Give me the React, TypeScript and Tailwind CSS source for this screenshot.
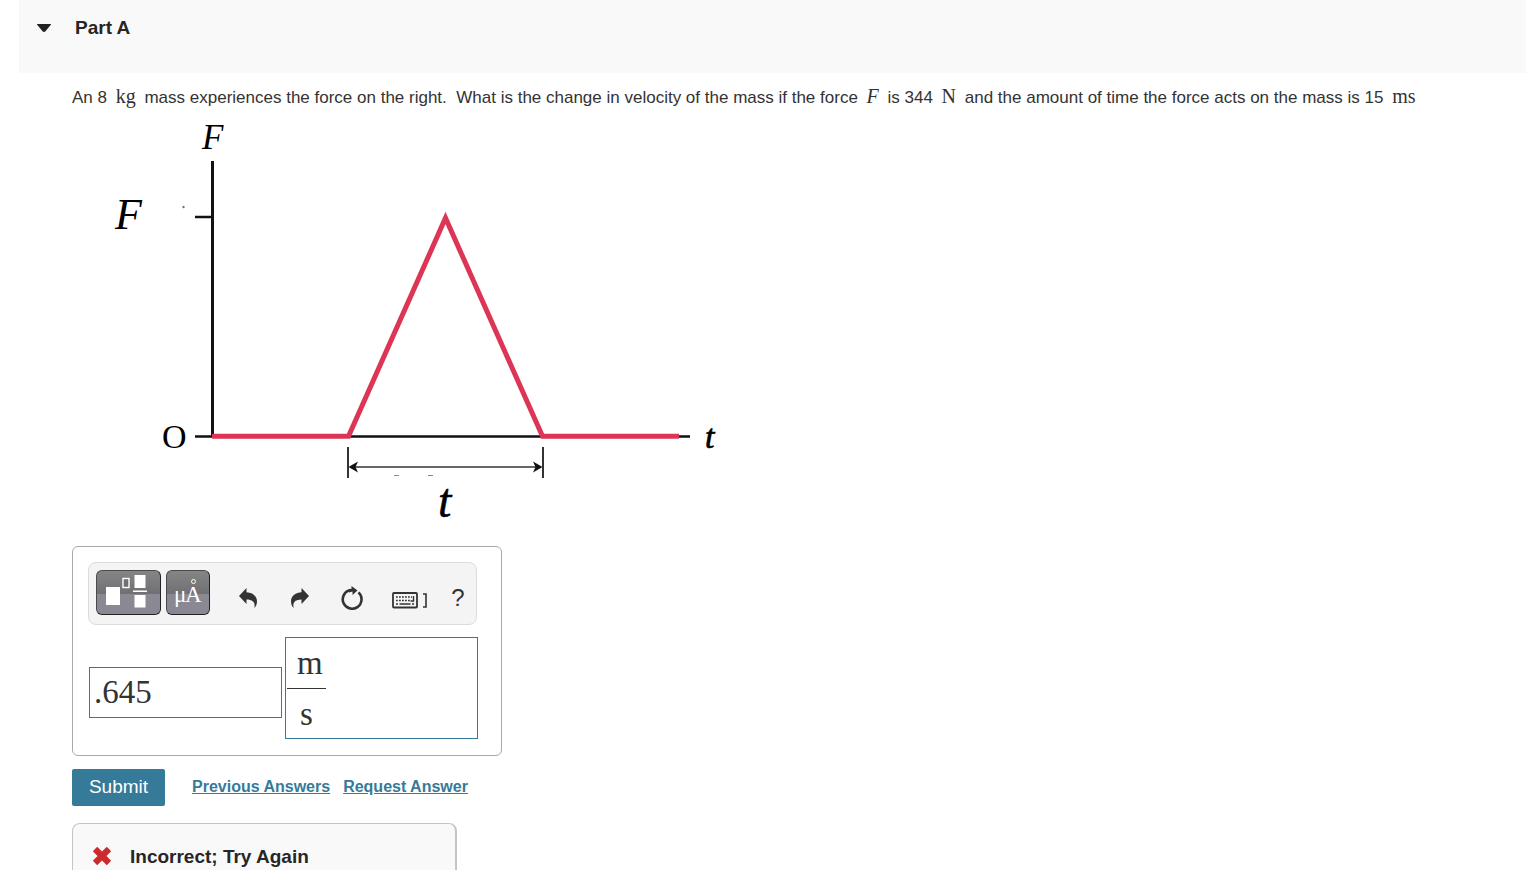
import type { ReactNode } from 'react';

const serif = "font-['Liberation_Serif',serif]";

function MathText({ children, italic = false }: { children: ReactNode; italic?: boolean }) {
  return <span className={`${serif} mx-1 text-[20px] ${italic ? 'italic' : ''}`}>{children}</span>;
}

function PartHeader() {
  return (
    <header className="ml-[19px] h-[73px] bg-[#f9f9f9] pt-3 pl-[18px]">
      <button type="button" aria-expanded="true" className="flex h-8 items-center text-[19px] font-bold text-[#262626]">
        <svg width="14" height="8" viewBox="0 0 14 8" className="mr-6 fill-[#222]">
          <path d="M0 0H14Q14 1 13 1.8L8.5 7.2Q7 8.6 5.5 7.2L1 1.8Q0 1 0 0Z" />
        </svg>
        Part A
      </button>
    </header>
  );
}

function ForceGraph() {
  return (
    <svg width="660" height="421" viewBox="72 109 660 421" className="block" role="img" aria-label="Force as a function of time">
      <g className="font-['Liberation_Serif',serif] italic" fill="#000">
        <text x="202" y="149" fontSize="35">F</text>
        <text x="115" y="229" fontSize="44">F</text>
        <text x="705" y="448" fontSize="34" stroke="#000" strokeWidth="0.7">t</text>
        <text x="438" y="517" fontSize="48" stroke="#000" strokeWidth="0.5">t</text>
      </g>
      <text x="162" y="448" fontSize="34" className="font-['Liberation_Serif',serif]">O</text>

      {/* axes */}
      <path d="M212.5 161V437" stroke="#111" strokeWidth="3" />
      <path d="M195 217H212M195 436.5H690" stroke="#111" strokeWidth="2.4" />
      <circle cx="183.5" cy="207" r="1.2" fill="#777" />

      {/* force pulse */}
      <path d="M212 436.3H348.5L445.5 218L542.5 436.3H679" fill="none" stroke="#dc3556" strokeWidth="5" strokeMiterlimit="10" />

      {/* duration marker */}
      <path d="M348 447V478M543 447V478" stroke="#333" strokeWidth="2" />
      <path d="M352 467H540" stroke="#333" strokeWidth="1.6" />
      <path d="M348.5 467L358 461.5L355.5 467L358 472.5ZM542.5 467L533 461.5L535.5 467L533 472.5Z" fill="#111" />
      <path d="M394 475.5H399M428 475.5H433" fill="none" stroke="#888" strokeWidth="1" />
    </svg>
  );
}

function UndoArrow() {
  return <path d="M0 8L7.5 0V4.300C13 4.500 18 7.500 18 13.500C18 16 17 18.500 15.300 20C16.500 15 14.500 11.500 7.500 11.500V16Z" />;
}

function Toolbar() {
  const darkButton =
    'flex h-[45px] shrink-0 items-center justify-center overflow-hidden rounded-md border border-[#4a4a4c] border-r-[#222] border-b-[#222] bg-linear-to-b from-[#858588] to-[#5f5f60]';
  const iconButton = 'flex h-12 w-13 shrink-0 items-center justify-center';

  return (
    <div role="toolbar" className="flex h-[63px] items-start rounded-lg border border-[#dcdcdc] bg-[#f4f4f4] py-[7px] pl-[7px]">
      <button type="button" aria-label="Templates" className={`${darkButton} w-[65px]`}>
        <svg width="63" height="43" viewBox="97 571 63 43" className="shrink-0">
          <rect x="97" y="594" width="63" height="20" fill="#8a8993" />
          <g fill="#fff">
            <path d="M106 587H120V605H106ZM134.500 575H145.500V588H134.500ZM134.500 595H145.500V607.500H134.500ZM133 590.500H147V592H133Z" />
          </g>
          <rect x="123" y="578.500" width="6" height="9" fill="#707073" stroke="#fff" strokeWidth="1.400" />
        </svg>
      </button>
      <button type="button" aria-label="Units" className={`${darkButton} ml-[5px] w-11`}>
        <svg width="42" height="43" viewBox="167 571 42 43" className="shrink-0">
          <rect x="167" y="594" width="42" height="20" fill="#8a8993" />
          <text x="174" y="602" fontSize="23" fill="#fff" className="font-['Liberation_Serif',serif]">μ</text>
          <text x="185" y="602" fontSize="23" fill="#fff" className="font-['Liberation_Serif',serif]">A</text>
          <circle cx="193.500" cy="581.500" r="2" fill="none" stroke="#fff" strokeWidth="1" />
        </svg>
      </button>
      <div className="ml-3 flex pt-1">
        <button type="button" aria-label="Undo" className={iconButton}>
          <svg width="18" height="20" viewBox="0 0 18 20" className="fill-[#333]"><UndoArrow /></svg>
        </button>
        <button type="button" aria-label="Redo" className={iconButton}>
          <svg width="18" height="20" viewBox="0 0 18 20" className="fill-[#333]">
            <g transform="translate(18 0) scale(-1 1)"><UndoArrow /></g>
          </svg>
        </button>
        <button type="button" aria-label="Reset" className={iconButton}>
          <svg width="22" height="24" viewBox="0 0 22 24">
            <path d="M17.500 6.400A9.400 9.400 0 1 1 10 4" fill="none" stroke="#333" strokeWidth="2.600" />
            <path d="M10.500 0L16.500 4.500L11.500 9V5.500L8 6.500V3.500L10.500 2.700Z" fill="#333" />
          </svg>
        </button>
        <button type="button" aria-label="Keyboard shortcuts" className="flex h-12 w-16 shrink-0 items-center justify-center pt-1">
          <svg width="36" height="17" viewBox="0 0 36 17" fill="none" stroke="#333">
            <rect x="1" y="1" width="24" height="14.500" rx="1" strokeWidth="1.800" />
            <path d="M4 5H20" strokeWidth="1.600" strokeDasharray="1.800 1.200" />
            <path d="M4 8.500H18" strokeWidth="1.600" strokeDasharray="1.800 1.200" />
            <path d="M4 12H6M7.500 12H18.500M20 12H22" strokeWidth="1.600" />
            <path d="M21.500 4V9H18.500" strokeWidth="1.400" />
            <path d="M31 2H34V15H31" strokeWidth="1.600" />
          </svg>
        </button>
        <button type="button" aria-label="Help" className="flex h-12 w-8 shrink-0 items-center justify-center text-[24px] text-[#333]">?</button>
      </div>
    </div>
  );
}

function AnswerBox() {
  const fractionPart = `${serif} block w-[39px] text-[33px] leading-[50px] text-[#333] outline-none`;

  return (
    <div className="mt-4 w-[430px] rounded-md border border-[#a9a9a9] pt-[15px] pr-6 pb-4 pl-[15px]">
      <Toolbar />
      <div className="mt-3 flex items-end gap-[3px]">
        <input
          aria-label="Value"
          defaultValue=".645"
          className={`${serif} mb-[21px] ml-px h-[51px] w-[193px] shrink-0 border border-[#367a99] px-1 text-[33px] text-[#333] outline-none`}
        />
        <div role="group" aria-label="Units" className="h-[102px] w-[193px] shrink-0 border border-[#367a99] pl-px">
          <input aria-label="Unit numerator" defaultValue="m" className={`${fractionPart} h-[51px] border-b border-[#333] pl-[10px]`} />
          <input aria-label="Unit denominator" defaultValue="s" className={`${fractionPart} h-[49px] pl-[13px]`} />
        </div>
      </div>
    </div>
  );
}

export default function App() {
  return (
    <div className="min-h-screen bg-white font-['Liberation_Sans',Arial,sans-serif] text-[#333]">
      <PartHeader />
      <main className="pl-[72px]">
        <p className="h-9 pt-[11px] text-[17px] leading-6">
          An 8 <MathText>kg</MathText> mass experiences the force on the right.&nbsp; What is the change in velocity of the mass if the force{' '}
          <MathText italic>F</MathText> is 344 <MathText>N</MathText> and the amount of time the force acts on the mass is 15{' '}
          <MathText>ms</MathText>
        </p>
        <ForceGraph />
        <AnswerBox />

        <div className="mt-[13px] flex items-center">
          <button type="submit" className="h-[37px] w-[93px] rounded-xs bg-[#367a99] text-[19px] text-white">Submit</button>
          <a href="#previous" className="ml-[27px] pb-0.5 text-[16px] font-bold text-[#367a99] underline">Previous Answers</a>
          <a href="#request" className="ml-[13px] pb-0.5 text-[16px] font-bold text-[#367a99] underline">Request Answer</a>
        </div>

        <section className="mt-[17px] flex w-[385px] items-center rounded-t-lg border border-r-2 border-b-0 border-[#c4c4c4] bg-[#f9f9f9] pt-[21px] pb-1 pl-[19px]">
          <svg width="20" height="20" viewBox="0 0 20 20" className="mr-[18px] mb-0.5" aria-hidden="true">
            <path
              d="M5.200 1.800L10 6.500L14.800 1.800L18.200 5.200L13.500 10L18.200 14.800L14.800 18.200L10 13.500L5.200 18.200L1.800 14.800L6.500 10L1.800 5.200Z"
              fill="#cb2a2e"
              stroke="#cb2a2e"
              strokeWidth="1.400"
              strokeLinejoin="round"
            />
          </svg>
          <h2 className="text-[19px] font-bold leading-6 text-[#262626]">Incorrect; Try Again</h2>
        </section>
      </main>
    </div>
  );
}
